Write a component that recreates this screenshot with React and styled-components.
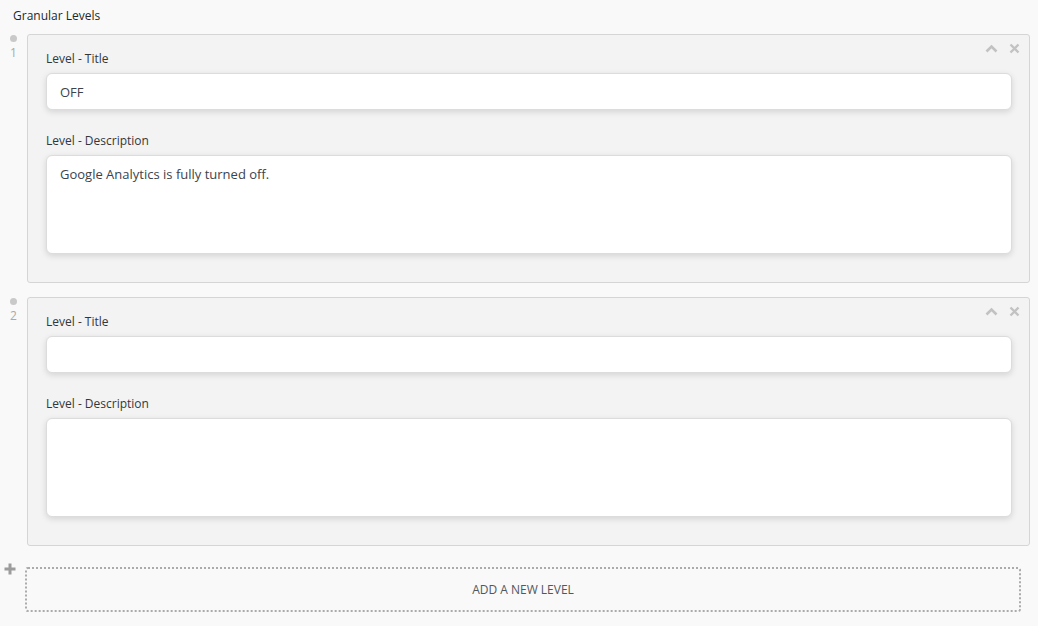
import React from 'react';
import styled, { createGlobalStyle } from 'styled-components';

const GlobalStyle = createGlobalStyle`
  html, body {
    margin: 0;
    padding: 0;
    background: #f9f9f9;
  }
  body {
    font-family: "Open Sans", "Noto Sans", sans-serif;
    color: #333;
  }
`;

const Page = styled.div`
  width: 1038px;
  min-height: 626px;
  box-sizing: border-box;
  padding: 7px 8px 15px 0;
`;

const Heading = styled.div`
  font-size: 12px;
  line-height: 18px;
  padding-left: 13px;
  margin-bottom: 9px;
  color: #23282d;
`;

const List = styled.div`
  display: flex;
  flex-direction: column;
  gap: 14px;
`;

const Row = styled.div`
  display: flex;
  align-items: flex-start;
`;

const Gutter = styled.div`
  width: 27px;
  flex: none;
  display: flex;
  flex-direction: column;
  align-items: center;
  padding-top: 1px;
`;

const Dot = styled.span`
  width: 7px;
  height: 7px;
  border-radius: 50%;
  background: #c9c9c9;
`;

const Index = styled.span`
  font-size: 12px;
  line-height: 16px;
  margin-top: 3px;
  color: #aaa;
`;

const Card = styled.div`
  position: relative;
  flex: 1;
  background: #f3f3f3;
  border: 1px solid #d5d5d5;
  border-radius: 3px;
  padding: 15px 17px 28px 18px;
`;

const Controls = styled.div`
  position: absolute;
  top: 8px;
  right: 9px;
  display: flex;
  align-items: center;
  gap: 11px;
  color: #c2c2c2;
`;

const Label = styled.div`
  font-size: 12px;
  line-height: 18px;
  color: #32373c;
  margin-bottom: 5px;
  margin-top: ${(p) => (p.$first ? '0' : '22px')};
`;

const Field = styled.div`
  box-sizing: border-box;
  height: ${(p) => (p.$tall ? '99px' : '37px')};
  background: #fff;
  border: 1px solid #dcdcdc;
  border-radius: 6px;
  box-shadow: 0 2px 6px rgba(0, 0, 0, 0.13);
  padding: ${(p) => (p.$tall ? '8px 13px' : '0 13px')};
  display: flex;
  align-items: ${(p) => (p.$tall ? 'flex-start' : 'center')};
  font-size: 13px;
  line-height: 20px;
  color: #3c434a;
`;

const AddRow = styled.div`
  display: flex;
  align-items: flex-start;
  margin-top: 21px;
`;

const PlusGutter = styled.div`
  width: 25px;
  flex: none;
  display: flex;
  justify-content: center;
  padding-right: 5px;
  box-sizing: border-box;
  margin-top: -4px;
  color: #9c9c9c;
`;

const AddButton = styled.div`
  flex: 1;
  margin-right: 9px;
  height: 45px;
  box-sizing: border-box;
  border: 2px dotted #ababab;
  border-radius: 3px;
  display: flex;
  align-items: center;
  justify-content: center;
  font-size: 12px;
  color: #50575e;
  text-transform: uppercase;
`;

const ChevronUp = () => (
  <svg width="13" height="9" viewBox="0 0 13 9">
    <path d="M1.5 7.5 L6.5 2.5 L11.5 7.5" fill="none" stroke="currentColor" strokeWidth="2.6" />
  </svg>
);

const Close = () => (
  <svg width="11" height="11" viewBox="0 0 11 11">
    <path d="M1.5 1.5 L9.5 9.5 M9.5 1.5 L1.5 9.5" fill="none" stroke="currentColor" strokeWidth="2.4" />
  </svg>
);

const Plus = () => (
  <svg width="12" height="12" viewBox="0 0 12 12">
    <path d="M6 0.5 V11.5 M0.5 6 H11.5" fill="none" stroke="currentColor" strokeWidth="3" />
  </svg>
);

const levels = [
  { id: 1, title: 'OFF', description: 'Google Analytics is fully turned off.' },
  { id: 2, title: '', description: '' },
];

const App = () => {
  return (
    <Page>
      <GlobalStyle />
      <Heading>Granular Levels</Heading>
      <List>
        {levels.map((level, i) => (
          <Row key={level.id}>
            <Gutter>
              <Dot />
              <Index>{i + 1}</Index>
            </Gutter>
            <Card>
              <Controls>
                <ChevronUp />
                <Close />
              </Controls>
              <Label $first>Level - Title</Label>
              <Field>{level.title}</Field>
              <Label>Level - Description</Label>
              <Field $tall>{level.description}</Field>
            </Card>
          </Row>
        ))}
      </List>
      <AddRow>
        <PlusGutter>
          <Plus />
        </PlusGutter>
        <AddButton>Add a new level</AddButton>
      </AddRow>
    </Page>
  );
};

export default App;
